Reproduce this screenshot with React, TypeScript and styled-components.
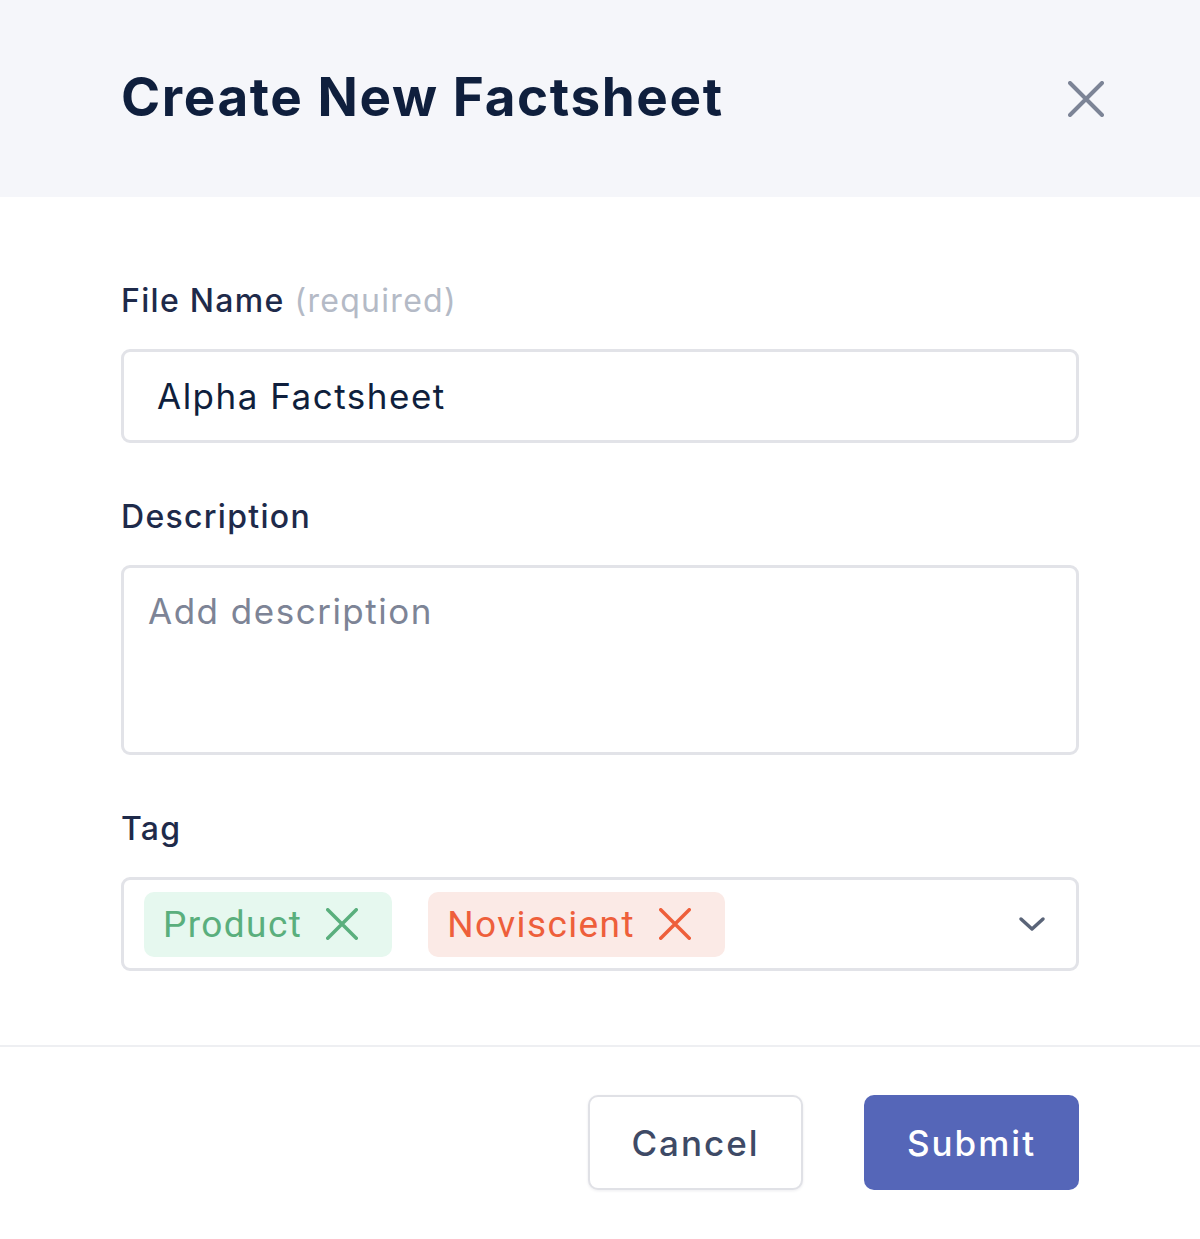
import React, { useState } from 'react';
import styled, { createGlobalStyle } from 'styled-components';

const GlobalStyle = createGlobalStyle`
  html, body {
    margin: 0;
    padding: 0;
    background: #ffffff;
  }
  * {
    box-sizing: border-box;
  }
`;

const FONT = `'Inter', 'Open Sans', sans-serif`;

const Dialog = styled.div`
  width: 1200px;
  background: #ffffff;
  font-family: ${FONT};
`;

const Header = styled.header`
  height: 197px;
  background: #f5f6fa;
  display: flex;
  align-items: center;
  justify-content: space-between;
  padding: 0 94px 4px 121px;
`;

const Title = styled.h1`
  margin: 0;
  font-size: 53px;
  font-weight: 700;
  color: #0f1f3d;
  letter-spacing: 1.6px;
`;

const CloseButton = styled.button`
  background: none;
  border: none;
  padding: 0;
  width: 40px;
  height: 40px;
  display: flex;
  align-items: center;
  justify-content: center;
  cursor: pointer;
  color: #7c8496;
  margin-top: 4px;
`;

const Body = styled.div`
  padding: 84px 121px 74px;
  display: flex;
  flex-direction: column;
  gap: 54px;
`;

const Field = styled.div`
  display: flex;
  flex-direction: column;
  gap: 28px;
`;

const Label = styled.label`
  font-size: 32px;
  font-weight: 500;
  color: #1e2a4a;
  line-height: 40px;
  letter-spacing: 1.3px;
`;

const Hint = styled.span`
  color: #b4bac6;
  font-weight: 400;
`;

const TextInput = styled.input`
  width: 100%;
  height: 94px;
  border: 3px solid #e2e3e8;
  border-radius: 9px;
  padding: 0 33px;
  font-family: ${FONT};
  font-size: 35px;
  letter-spacing: 1.5px;
  color: #0f1f3d;
  outline: none;
`;

const TextArea = styled.textarea`
  width: 100%;
  height: 190px;
  border: 3px solid #e2e3e8;
  border-radius: 9px;
  padding: 22px 24px;
  font-family: ${FONT};
  font-size: 35px;
  letter-spacing: 1.5px;
  color: #0f1f3d;
  resize: none;
  outline: none;
  display: block;

  &::placeholder {
    color: #7d8496;
  }
`;

const TagBox = styled.div`
  height: 94px;
  border: 3px solid #e2e3e8;
  border-radius: 9px;
  background: #ffffff;
  display: flex;
  align-items: center;
  padding: 0 30px 0 20px;
  gap: 36px;
`;

const Chip = styled.span<{ $fg: string; $bg: string }>`
  display: inline-flex;
  align-items: center;
  gap: 24px;
  height: 65px;
  padding: 0 34px 0 19px;
  border-radius: 10px;
  background: ${(p) => p.$bg};
  color: ${(p) => p.$fg};
  font-family: 'Roboto', 'Inter', sans-serif;
  font-size: 37px;
  letter-spacing: 1.4px;
`;

const ChipRemove = styled.button`
  background: none;
  border: none;
  padding: 0;
  display: flex;
  color: inherit;
  cursor: pointer;
`;

const Chevron = styled.span`
  margin-left: auto;
  display: flex;
  color: #5a6478;
`;

const Footer = styled.footer`
  border-top: 2px solid #eeeff2;
  display: flex;
  justify-content: flex-end;
  gap: 61px;
  padding: 48px 121px 48px;
`;

const Button = styled.button<{ $primary?: boolean }>`
  width: 215px;
  height: 95px;
  border-radius: 10px;
  font-family: ${FONT};
  font-size: 35px;
  font-weight: 500;
  letter-spacing: 2px;
  cursor: pointer;
  border: ${(p) => (p.$primary ? 'none' : '2px solid #e0e1e6')};
  background: ${(p) => (p.$primary ? '#5566b8' : '#ffffff')};
  color: ${(p) => (p.$primary ? '#ffffff' : '#3e4a66')};
  box-shadow: ${(p) => (p.$primary ? 'none' : '0 1px 3px rgba(20, 30, 60, 0.08)')};
`;

const Cross = ({ size, width }: { size: number; width: number }) => (
  <svg width={size} height={size} viewBox={`0 0 ${size} ${size}`} fill="none" stroke="currentColor" strokeWidth={width} strokeLinecap="round">
    <path d={`M${width / 2} ${width / 2}L${size - width / 2} ${size - width / 2}M${size - width / 2} ${width / 2}L${width / 2} ${size - width / 2}`} />
  </svg>
);

const tags = [
  { name: 'Product', fg: '#5aaf7d', bg: '#e6f8ef' },
  { name: 'Noviscient', fg: '#ee5f3b', bg: '#fbeae6' },
];

export default function App() {
  const [name, setName] = useState('Alpha Factsheet');

  return (
    <>
      <GlobalStyle />
      <Dialog>
        <Header>
          <Title>Create New Factsheet</Title>
          <CloseButton aria-label="Close">
            <Cross size={36} width={4} />
          </CloseButton>
        </Header>
        <Body>
          <Field>
            <Label>
              File Name <Hint>(required)</Hint>
            </Label>
            <TextInput value={name} onChange={(e) => setName(e.target.value)} />
          </Field>
          <Field>
            <Label>Description</Label>
            <TextArea placeholder="Add description" />
          </Field>
          <Field>
            <Label>Tag</Label>
            <TagBox>
              {tags.map((t) => (
                <Chip key={t.name} $fg={t.fg} $bg={t.bg}>
                  {t.name}
                  <ChipRemove aria-label={`Remove ${t.name}`}>
                    <Cross size={32} width={3.5} />
                  </ChipRemove>
                </Chip>
              ))}
              <Chevron>
                <svg width="28" height="17" viewBox="0 0 28 17" fill="none" stroke="currentColor" strokeWidth="3.5" strokeLinecap="round" strokeLinejoin="round">
                  <path d="M3 3L14 13L25 3" />
                </svg>
              </Chevron>
            </TagBox>
          </Field>
        </Body>
        <Footer>
          <Button>Cancel</Button>
          <Button $primary>Submit</Button>
        </Footer>
      </Dialog>
    </>
  );
}
